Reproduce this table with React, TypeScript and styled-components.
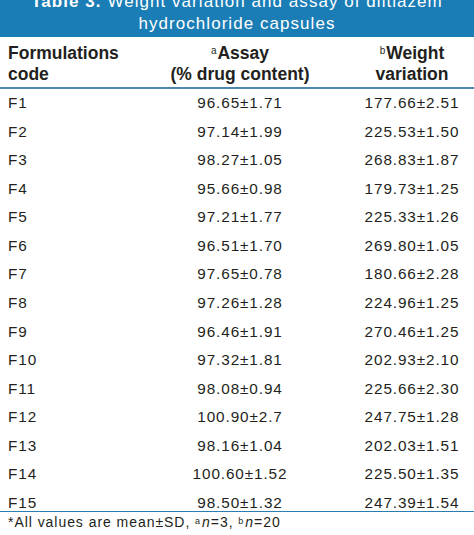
import React from "react";
import styled, { createGlobalStyle } from "styled-components";

const GlobalStyle = createGlobalStyle`
  html, body { margin: 0; padding: 0; background: #ffffff; }
  body { font-family: "Liberation Sans", Arial, Helvetica, sans-serif; color: #231f20; }
`;

const Page = styled.div`
  width: 474px;
  height: 535px;
  overflow: hidden;
  background: #ffffff;
`;

const TitleBand = styled.div`
  height: 37px;
  box-sizing: border-box;
  background: #1b7db5;
  color: #ffffff;
  display: flex;
  flex-direction: column;
  justify-content: flex-end;
  align-items: center;
  overflow: hidden;
  padding-bottom: 2px;
  font-size: 17px;
  line-height: 22px;
  letter-spacing: 1.05px;
  text-align: center;
`;

const TitleLine = styled.div`
  white-space: nowrap;
`;

const Strong = styled.span`
  font-weight: 700;
`;

const HeaderRow = styled.div`
  display: grid;
  grid-template-columns: 162px 140px 1fr;
  padding: 6px 0 2px 8px;
  border-bottom: 2px solid #4d87ad;
  font-size: 17.5px;
  line-height: 21px;
  font-weight: 700;
`;

const Row = styled.div`
  display: grid;
  grid-template-columns: 162px 140px 1fr;
  padding-left: 8px;
  height: 28.57px;
  font-size: 15.3px;
  line-height: 28.57px;
  letter-spacing: 0.9px;
  &:last-child {
    height: 22.5px;
  }
`;

const Cell = styled.div<{ $col: "code" | "assay" | "weight" }>`
  white-space: nowrap;
  text-align: ${(p) => (p.$col === "code" ? "left" : "center")};
  padding-left: ${(p) => (p.$col === "weight" ? "40px" : "0")};
`;

const Sup = styled.sup`
  font-size: 10px;
  font-weight: 400;
  vertical-align: top;
  line-height: 14px;
  position: relative;
  top: 1px;
  margin-right: 1px;
`;

const Footer = styled.div`
  border-top: 1.5px solid #2b7cb1;
  padding-left: 8px;
  font-size: 14px;
  line-height: 20px;
  letter-spacing: 0.95px;
  white-space: nowrap;
`;

const FootSup = styled.sup`
  font-size: 9px;
  vertical-align: top;
  line-height: 12px;
  position: relative;
  top: 3px;
  margin-right: 1px;
`;

const Ital = styled.i`
  font-style: italic;
`;

const rows: [string, string, string][] = [
  ["F1", "96.65±1.71", "177.66±2.51"],
  ["F2", "97.14±1.99", "225.53±1.50"],
  ["F3", "98.27±1.05", "268.83±1.87"],
  ["F4", "95.66±0.98", "179.73±1.25"],
  ["F5", "97.21±1.77", "225.33±1.26"],
  ["F6", "96.51±1.70", "269.80±1.05"],
  ["F7", "97.65±0.78", "180.66±2.28"],
  ["F8", "97.26±1.28", "224.96±1.25"],
  ["F9", "96.46±1.91", "270.46±1.25"],
  ["F10", "97.32±1.81", "202.93±2.10"],
  ["F11", "98.08±0.94", "225.66±2.30"],
  ["F12", "100.90±2.7", "247.75±1.28"],
  ["F13", "98.16±1.04", "202.03±1.51"],
  ["F14", "100.60±1.52", "225.50±1.35"],
  ["F15", "98.50±1.32", "247.39±1.54"],
];

export default function App() {
  return (
    <Page>
      <GlobalStyle />
      <TitleBand>
        <TitleLine>
          <Strong>Table 3.</Strong> Weight variation and assay of diltiazem
        </TitleLine>
        <TitleLine>hydrochloride capsules</TitleLine>
      </TitleBand>
      <HeaderRow>
        <Cell $col="code">
          Formulations
          <br />
          code
        </Cell>
        <Cell $col="assay">
          <Sup>a</Sup>Assay
          <br />
          (% drug content)
        </Cell>
        <Cell $col="weight">
          <Sup>b</Sup>Weight
          <br />
          variation
        </Cell>
      </HeaderRow>
      <div>
        {rows.map(([code, assay, weight]) => (
          <Row key={code}>
            <Cell $col="code">{code}</Cell>
            <Cell $col="assay">{assay}</Cell>
            <Cell $col="weight">{weight}</Cell>
          </Row>
        ))}
      </div>
      <Footer>
        *All values are mean±SD, <FootSup>a</FootSup>
        <Ital>n</Ital>=3, <FootSup>b</FootSup>
        <Ital>n</Ital>=20
      </Footer>
    </Page>
  );
}
